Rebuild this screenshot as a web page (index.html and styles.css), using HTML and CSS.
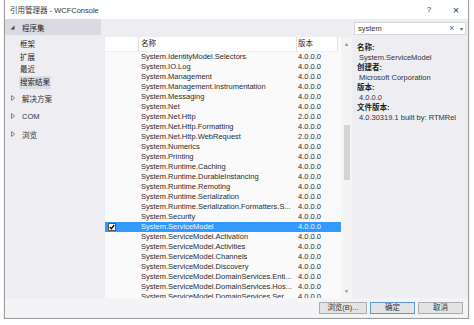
FILE: index.html
```html
<!DOCTYPE html>
<html>
<head>
<meta charset="utf-8">
<title>引用管理器 - WCFConsole</title>
<link rel="stylesheet" href="styles.css">
</head>
<body>
<div class="window">
  <div class="titlebar">
    <span class="title">引用管理器 - WCFConsole</span>
    <span class="tb-btn help">?</span>
    <span class="tb-btn close">×</span>
  </div>
  <div class="main">
    <div class="sidebar">
      <div class="group-head">
        <svg class="tri" width="5" height="5" viewBox="0 0 5 5"><path d="M4.5 0.5 L4.5 4.5 L0.5 4.5 Z" fill="#444"/></svg>
        <span>程序集</span>
      </div>
      <ul class="items">
        <li>框架</li>
        <li>扩展</li>
        <li>最近</li>
        <li><span class="current">搜索结果</span></li>
      </ul>
      <div class="group"><svg class="tri" width="4" height="6" viewBox="0 0 4 6"><path d="M0.5 0.5 L3.5 3 L0.5 5.5 Z" fill="none" stroke="#777" stroke-width="0.9"/></svg><span>解决方案</span></div>
      <div class="group"><svg class="tri" width="4" height="6" viewBox="0 0 4 6"><path d="M0.5 0.5 L3.5 3 L0.5 5.5 Z" fill="none" stroke="#777" stroke-width="0.9"/></svg><span>COM</span></div>
      <div class="group"><svg class="tri" width="4" height="6" viewBox="0 0 4 6"><path d="M0.5 0.5 L3.5 3 L0.5 5.5 Z" fill="none" stroke="#777" stroke-width="0.9"/></svg><span>浏览</span></div>
    </div>
    <div class="content">
      <div class="topband">
        <div class="search"><span class="query">system</span><span class="clear">×</span><span class="drop">▾</span></div>
      </div>
      <div class="body">
        <div class="list">
          <div class="grid">
            <div class="head"><span class="c-check"></span><span class="c-name">名称</span><span class="c-ver">版本</span></div>
            <div class="rows">
              <div class="row"><span class="c-check"></span><span class="c-name">System.IdentityModel.Selectors</span><span class="c-ver">4.0.0.0</span></div>
              <div class="row"><span class="c-check"></span><span class="c-name">System.IO.Log</span><span class="c-ver">4.0.0.0</span></div>
              <div class="row"><span class="c-check"></span><span class="c-name">System.Management</span><span class="c-ver">4.0.0.0</span></div>
              <div class="row"><span class="c-check"></span><span class="c-name">System.Management.Instrumentation</span><span class="c-ver">4.0.0.0</span></div>
              <div class="row"><span class="c-check"></span><span class="c-name">System.Messaging</span><span class="c-ver">4.0.0.0</span></div>
              <div class="row"><span class="c-check"></span><span class="c-name">System.Net</span><span class="c-ver">4.0.0.0</span></div>
              <div class="row"><span class="c-check"></span><span class="c-name">System.Net.Http</span><span class="c-ver">2.0.0.0</span></div>
              <div class="row"><span class="c-check"></span><span class="c-name">System.Net.Http.Formatting</span><span class="c-ver">4.0.0.0</span></div>
              <div class="row"><span class="c-check"></span><span class="c-name">System.Net.Http.WebRequest</span><span class="c-ver">2.0.0.0</span></div>
              <div class="row"><span class="c-check"></span><span class="c-name">System.Numerics</span><span class="c-ver">4.0.0.0</span></div>
              <div class="row"><span class="c-check"></span><span class="c-name">System.Printing</span><span class="c-ver">4.0.0.0</span></div>
              <div class="row"><span class="c-check"></span><span class="c-name">System.Runtime.Caching</span><span class="c-ver">4.0.0.0</span></div>
              <div class="row"><span class="c-check"></span><span class="c-name">System.Runtime.DurableInstancing</span><span class="c-ver">4.0.0.0</span></div>
              <div class="row"><span class="c-check"></span><span class="c-name">System.Runtime.Remoting</span><span class="c-ver">4.0.0.0</span></div>
              <div class="row"><span class="c-check"></span><span class="c-name">System.Runtime.Serialization</span><span class="c-ver">4.0.0.0</span></div>
              <div class="row"><span class="c-check"></span><span class="c-name">System.Runtime.Serialization.Formatters.S...</span><span class="c-ver">4.0.0.0</span></div>
              <div class="row"><span class="c-check"></span><span class="c-name">System.Security</span><span class="c-ver">4.0.0.0</span></div>
              <div class="row selected"><span class="c-check"><span class="checkbox"><svg width="6" height="6" viewBox="0 0 6 6"><path d="M0.8 3.2 L2.4 4.8 L5.2 1" fill="none" stroke="#000" stroke-width="1.3"/></svg></span></span><span class="c-name">System.ServiceModel</span><span class="c-ver">4.0.0.0</span></div>
              <div class="row"><span class="c-check"></span><span class="c-name">System.ServiceModel.Activation</span><span class="c-ver">4.0.0.0</span></div>
              <div class="row"><span class="c-check"></span><span class="c-name">System.ServiceModel.Activities</span><span class="c-ver">4.0.0.0</span></div>
              <div class="row"><span class="c-check"></span><span class="c-name">System.ServiceModel.Channels</span><span class="c-ver">4.0.0.0</span></div>
              <div class="row"><span class="c-check"></span><span class="c-name">System.ServiceModel.Discovery</span><span class="c-ver">4.0.0.0</span></div>
              <div class="row"><span class="c-check"></span><span class="c-name">System.ServiceModel.DomainServices.Enti...</span><span class="c-ver">4.0.0.0</span></div>
              <div class="row"><span class="c-check"></span><span class="c-name">System.ServiceModel.DomainServices.Hos...</span><span class="c-ver">4.0.0.0</span></div>
              <div class="row"><span class="c-check"></span><span class="c-name">System.ServiceModel.DomainServices.Ser...</span><span class="c-ver">4.0.0.0</span></div>
            </div>
          </div>
          <div class="scrollbar">
            <span class="arrow">▲</span>
            <span class="track"><span class="thumb"></span></span>
            <span class="arrow">▼</span>
          </div>
        </div>
        <div class="details">
          <div class="label">名称:</div>
          <div class="value">System.ServiceModel</div>
          <div class="label">创建者:</div>
          <div class="value">Microsoft Corporation</div>
          <div class="label">版本:</div>
          <div class="value">4.0.0.0</div>
          <div class="label">文件版本:</div>
          <div class="value">4.0.30319.1 built by: RTMRel</div>
        </div>
      </div>
    </div>
  </div>
  <div class="footer">
    <button class="btn browse">浏览(B)...</button>
    <button class="btn default">确定</button>
    <button class="btn">取消</button>
  </div>
</div>
</body>
</html>
```
FILE: styles.css
```css
* { box-sizing: border-box; margin: 0; padding: 0; }
html, body { background: #ffffff; }
body {
  font-family: "Liberation Sans", "Noto Sans CJK SC", sans-serif;
  font-size: 7.5px;
  color: #1e1e1e;
}
.window {
  margin-left: 4px;
  width: 465px;
  height: 319px;
  border: 1px solid #9c9c9c;
  border-top: none;
  display: flex;
  flex-direction: column;
  background: #eeeef2;
  box-shadow: 0 1px 2px rgba(0,0,0,0.12);
}
.titlebar {
  height: 19px;
  background: #ffffff;
  display: flex;
  align-items: center;
  padding-left: 5px;
  padding-right: 5px;
}
.title { flex: 1; color: #333; }
.tb-btn {
  width: 14px;
  text-align: center;
  color: #333;
}
.help { font-size: 8px; margin-right: 13px; }
.close { font-size: 11px; }
.main {
  display: flex;
  height: 279px;
}
.sidebar {
  width: 100px;
  background: #eeeef2;
}
.group-head {
  height: 16px;
  margin-right: 4px;
  background: #dadae3;
  display: flex;
  align-items: center;
  padding-left: 5px;
  gap: 7px;
}
.group-head .tri { margin-top: 1px; }
.items {
  list-style: none;
  padding-top: 4px;
}
.items li {
  height: 12.5px;
  line-height: 12.5px;
  padding-left: 15px;
}
.current {
  background: #dcdce5;
  margin-left: -1px;
  padding: 2px 1px;
}
.group {
  height: 18px;
  display: flex;
  align-items: center;
  padding-left: 6px;
  gap: 7px;
  color: #333;
}
.group:first-of-type { margin-top: 2px; }
.content {
  flex: 1;
  display: flex;
  flex-direction: column;
}
.topband {
  height: 18px;
  display: flex;
  justify-content: flex-end;
  align-items: center;
  padding-right: 2px;
}
.search {
  width: 112px;
  height: 13px;
  background: #ffffff;
  border: 1px solid #d6d6dc;
  display: flex;
  align-items: center;
  padding-left: 3px;
}
.query { flex: 1; color: #333; }
.clear { color: #1e72d0; font-size: 9px; width: 8px; }
.drop { color: #666; font-size: 6px; width: 8px; text-align: center; }
.body {
  flex: 1;
  display: flex;
  min-height: 0;
}
.list {
  width: 247px;
  display: flex;
  background: #fafafa;
  overflow: hidden;
}
.grid {
  width: 236px;
  overflow: hidden;
}
.head {
  height: 15px;
  display: flex;
  align-items: center;
  background: #ffffff;
  border-bottom: 1px solid #f0f0f0;
  width: 233px;
}
.head .c-name, .head .c-ver {
  height: 15px;
  line-height: 14px;
  border-left: 1px solid #e2e2e2;
}
.head .c-name { padding-left: 2px; }
.head .c-ver { padding-left: 1px; border-right: 1px solid #e2e2e2; }
.c-check { width: 33px; flex: none; display: flex; align-items: center; padding-left: 3px; }
.c-name { width: 158px; flex: none; padding-left: 3px; white-space: nowrap; overflow: hidden; }
.c-ver { flex: 1; padding-left: 2px; white-space: nowrap; }
.row {
  display: flex;
  height: 10px;
  line-height: 10px;
  color: #2a2a2a;
}
.row.selected {
  background: #3399ff;
  color: #f2f8ff;
}
.checkbox {
  width: 8px;
  height: 8px;
  background: #ffffff;
  border: 1px solid #555;
  display: flex;
  align-items: center;
  justify-content: center;
}
.scrollbar {
  width: 11px;
  background: #f4f4f4;
  display: flex;
  flex-direction: column;
}
.arrow {
  height: 14px;
  line-height: 14px;
  text-align: center;
  font-size: 5px;
  color: #888;
}
.track { flex: 1; }
.thumb {
  display: block;
  width: 6px;
  height: 55px;
  margin: 74px 0 0 3px;
  background: #d4d4d4;
}
.details {
  flex: 1;
  padding: 6px 0 0 5px;
  line-height: 10px;
}
.label { font-weight: bold; }
.value { padding-left: 2px; color: #333; }
.footer {
  height: 19px;
  background: #f4f4f6;
  display: flex;
  justify-content: flex-end;
  align-items: flex-start;
  padding-top: 4px;
  padding-right: 5px;
  gap: 3px;
}
.btn {
  height: 12px;
  width: 45px;
  font-family: "Liberation Sans", "Noto Sans CJK SC", sans-serif;
  font-size: 7.5px;
  line-height: 10px;
  color: #333;
  background: #e3e3e3;
  border: 1px solid #adadad;
}
.btn.browse { width: 48px; }
.btn.default { border-color: #5a9ad8; }
```
